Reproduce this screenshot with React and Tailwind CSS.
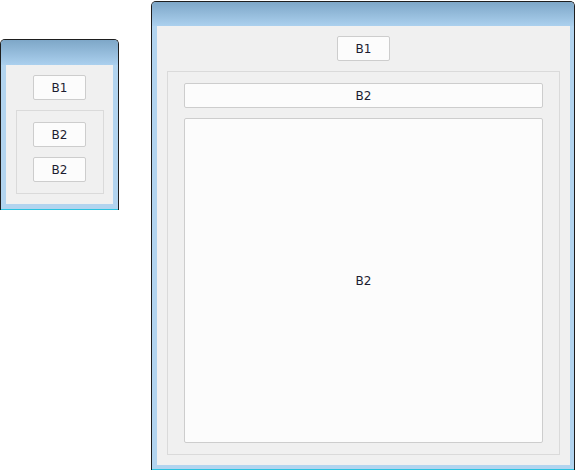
import React from 'react';

const Btn = ({ children, className = '' }) => (
  <div
    className={`flex items-center justify-center rounded-[2px] border border-[#cdcdcd] bg-[#fcfcfc] text-[12px] text-[#1c1c30] ${className}`}
  >
    {children}
  </div>
);

// window chrome: dark outline, blue title gradient, light blue frame, cyan bottom edge
const Window = ({ className = '', titleClass = '', children }) => (
  <div
    className={`flex flex-col overflow-hidden rounded-t-[5px] border border-b-0 border-[#1e1e1e] bg-[#b2d4ef] ${className}`}
  >
    <div className={`shrink-0 bg-gradient-to-b from-[#7ea7c8] to-[#abd0ee] ${titleClass}`} />
    {children}
    <div className="h-px shrink-0 bg-[#29c3e0]" />
  </div>
);

export default function App() {
  return (
    <div className="flex items-start gap-[32px] font-['DejaVu_Sans',sans-serif]">
      {/* small window */}
      <Window className="mt-[39px] w-[119px]" titleClass="h-[25px]">
        <div className="flex px-[5px] pb-[5px]">
          <div className="flex h-[139px] w-[107px] flex-col items-center bg-[#f0f0f0] pt-[10px]">
            <Btn className="h-[25px] w-[53px]">B1</Btn>
            <div className="mt-[10px] flex w-[88px] flex-col items-center gap-[10px] border border-[#dadada] pt-[11px] pb-[11px]">
              <Btn className="h-[25px] w-[53px]">B2</Btn>
              <Btn className="h-[25px] w-[53px]">B2</Btn>
            </div>
          </div>
        </div>
      </Window>

      {/* large window */}
      <Window className="mt-[1px] w-[424px]" titleClass="h-[24px]">
        <div className="flex pl-[5px] pr-[4px] pb-[4px]">
          <div className="flex h-[439px] w-[413px] flex-col items-center bg-[#f0f0f0] pt-[10px] pb-[10px]">
            <Btn className="h-[25px] w-[53px]">B1</Btn>
            <div className="mt-[10px] flex w-[393px] flex-1 flex-col gap-[10px] border border-[#dadada] px-[16px] pt-[11px] pb-[11px]">
              <Btn className="h-[25px] w-full">B2</Btn>
              <Btn className="w-full flex-1">B2</Btn>
            </div>
          </div>
        </div>
      </Window>
    </div>
  );
}
